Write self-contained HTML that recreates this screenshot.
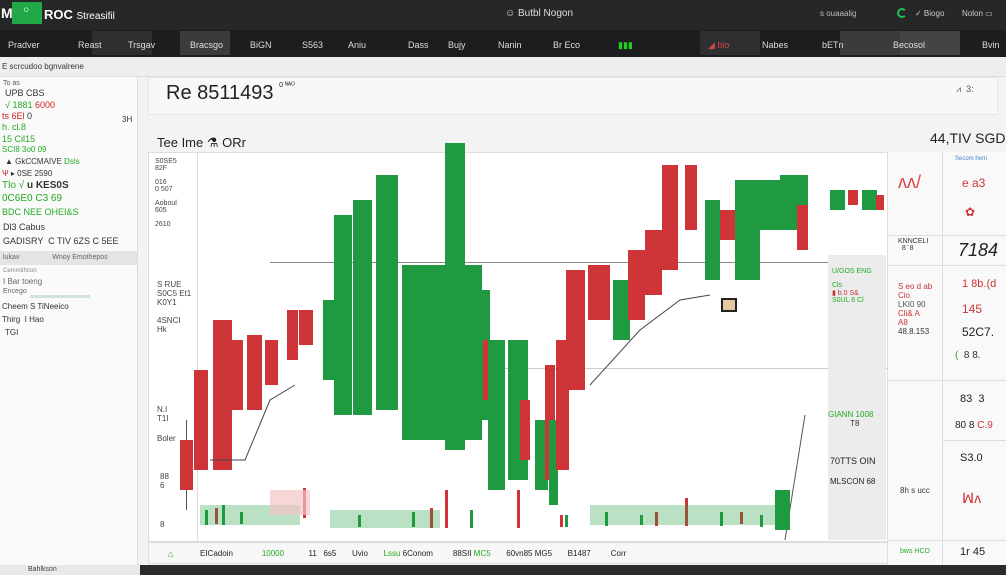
<!DOCTYPE html>
<html><head><meta charset="utf-8"><style>
*{margin:0;padding:0;box-sizing:border-box}
body{width:1006px;height:575px;overflow:hidden;background:#f3f3f3;font-family:"Liberation Sans",sans-serif;position:relative;color:#333}
.a{position:absolute}
.g{position:absolute;background:#1f9a40}
.r{position:absolute;background:#cf3438}
.w{position:absolute;background:#555;width:1px}
.t{position:absolute;font-size:10px;white-space:nowrap}
.nav span{position:absolute;top:40px;font-size:9px;color:#ddd}
</style></head><body>
<div class="a" style="left:0;top:0;width:1006px;height:30px;background:#262728"></div>
<div class="a" style="left:0;top:30px;width:1006px;height:27px;background:#1c1d1e"></div>
<div class="a" style="left:92px;top:31px;width:60px;height:24px;background:#2e2f30"></div>
<div class="a" style="left:180px;top:31px;width:50px;height:24px;background:#3a3b3c"></div>
<div class="a" style="left:700px;top:31px;width:60px;height:24px;background:#2e2f30"></div>
<div class="a" style="left:840px;top:31px;width:60px;height:24px;background:#3a3b3c"></div>
<div class="a" style="left:900px;top:31px;width:60px;height:24px;background:#444"></div>
<div class="t" style="left:1px;top:5px;color:#fff;font-size:14px;font-weight:bold">M</div>
<div class="a" style="left:12px;top:2px;width:30px;height:22px;background:#22a846"></div>
<div class="t" style="left:24px;top:6px;color:#cfe;font-size:9px">ᴼ</div>
<div class="t" style="left:44px;top:7px;color:#fff;font-size:13px;font-weight:bold">ROC <span style="font-weight:normal;font-size:10px">Streasifil</span></div>
<div class="t" style="left:505px;top:8px;color:#ddd;font-size:10px">☺ Butbl Nogon</div>
<div class="t" style="left:820px;top:9px;color:#bbb;font-size:8px">s ouaaalig</div>
<div class="a" style="left:897px;top:8px;width:10px;height:10px;border:2px solid #22c050;border-radius:50%;border-right-color:transparent"></div>
<div class="t" style="left:915px;top:9px;color:#ccc;font-size:8px">✓ Biogo</div>
<div class="t" style="left:962px;top:9px;color:#ccc;font-size:8px">Nolon ▭</div>
<div class="nav">
<span style="left:8px">Pradver</span><span style="left:78px">Reast</span><span style="left:128px">Trsgav</span><span style="left:190px">Bracsgo</span><span style="left:250px">BiGN</span><span style="left:302px">S563</span><span style="left:348px">Aniu</span><span style="left:408px">Dass</span><span style="left:448px">Bujy</span><span style="left:498px">Nanin</span><span style="left:553px">Br Eco</span><span style="left:618px;color:#2c2">▮▮▮</span><span style="left:708px;color:#c44">◢ bio</span><span style="left:762px">Nabes</span><span style="left:822px">bETn</span><span style="left:893px">Becosol</span><span style="left:982px">Bvin</span>
</div>
<div class="a" style="left:0;top:57px;width:1006px;height:20px;background:#eeeeee;border-bottom:1px solid #ddd"></div>
<div class="t" style="left:2px;top:62px;font-size:8px;color:#333">E scrcudoo bgnvalrene</div>
<div class="a" style="left:0;top:77px;width:138px;height:488px;background:#fafafa;border-right:1px solid #ddd"></div>
<div class="t" style="left:3px;top:80px;font-size:7px;color:#555">To as</div>
<div class="t" style="left:5px;top:88px;font-size:9px">UPB CBS</div>
<div class="t" style="left:5px;top:100px;font-size:9px;color:#2a2">√ 1881 <span style="color:#c22">6000</span></div>
<div class="t" style="left:2px;top:111px;font-size:9px;color:#c22">ts 6El <span style="color:#333">0</span></div>
<div class="t" style="left:2px;top:122px;font-size:9px;color:#2a2">h. cl.8</div>
<div class="t" style="left:2px;top:134px;font-size:9px;color:#2a2">15 Cil15</div>
<div class="t" style="left:2px;top:145px;font-size:8px;color:#2a2">SCI8 3o0 09</div>
<div class="t" style="left:5px;top:157px;font-size:8px">▲ GkCCMAIVE <span style="color:#2a2">Dsls</span></div>
<div class="t" style="left:2px;top:169px;font-size:8px;color:#c22">Ψ <span style="color:#333">▸ 0SE 2590</span></div>
<div class="t" style="left:2px;top:180px;font-size:10px;color:#2a2">Tlo √ <b style="color:#333">u KES0S</b></div>
<div class="t" style="left:2px;top:193px;font-size:10px;color:#2a2">0C6E0 C3 69</div>
<div class="t" style="left:2px;top:207px;font-size:9px;color:#2a2">BDC NEE OHEI&amp;S</div>
<div class="t" style="left:3px;top:222px;font-size:9px">Dl3 Cabus</div>
<div class="t" style="left:3px;top:236px;font-size:9px">GADISRY &nbsp;C TIV 6ZS C 5EE</div>
<div class="a" style="left:0;top:251px;width:137px;height:14px;background:#e4e4e4"></div>
<div class="t" style="left:3px;top:254px;font-size:7px;color:#666">lukav &nbsp; &nbsp; &nbsp; &nbsp; &nbsp; &nbsp; &nbsp; &nbsp; Wnoy Emothepos</div>
<div class="t" style="left:3px;top:268px;font-size:6px;color:#888">Cemmithcon</div>
<div class="t" style="left:3px;top:277px;font-size:8px;color:#666">I Bar toeng</div>
<div class="t" style="left:3px;top:288px;font-size:7px;color:#666">Encego</div>
<div class="a" style="left:30px;top:295px;width:60px;height:3px;background:#cfe3dc"></div>
<div class="t" style="left:2px;top:302px;font-size:8px">Cheem S TiNeeico</div>
<div class="t" style="left:2px;top:315px;font-size:8px">Thirg &nbsp;I Hao</div>
<div class="t" style="left:5px;top:328px;font-size:8px">TGI</div>
<div class="t" style="left:122px;top:115px;font-size:8px">3H</div>
<div class="a" style="left:148px;top:77px;width:850px;height:38px;background:#f8f8f8;border:1px solid #e5e5e5"></div>
<div class="t" style="left:166px;top:82px;font-size:20px;color:#222">Re 8511493 <span style="font-size:7px;vertical-align:top">0 ᴺᴬᴼ</span></div>
<div class="t" style="left:956px;top:84px;font-size:9px;color:#555">⩘ &nbsp;3:</div>
<div class="t" style="left:157px;top:135px;font-size:13px;color:#222">Tee Ime ⚗ ORr</div>
<div class="t" style="left:930px;top:130px;font-size:14px;color:#222">44,TIV SGDL</div>
<div class="a" style="left:148px;top:152px;width:740px;height:390px;background:#fff;border:1px solid #ddd"></div>
<div class="a" style="left:197px;top:152px;width:1px;height:390px;background:#ddd"></div>
<div class="a" style="left:270px;top:262px;width:560px;height:1px;background:#888"></div>
<div class="a" style="left:460px;top:368px;width:428px;height:1px;background:#ccc"></div>
<div class="a" style="left:828px;top:255px;width:58px;height:285px;background:#ececec"></div>
<div class="t" style="left:155px;top:158px;font-size:7px;color:#444">S0SE5<br>82F<br><br>016<br>0 507<br><br>Aoboul<br>605<br><br>2610</div>
<div class="t" style="left:157px;top:280px;font-size:8px;color:#444">S RUE<br>S0C5 Et1<br>K0Y1<br><br>4SNCI<br>Hk</div>
<div class="t" style="left:157px;top:405px;font-size:8px;color:#444">N.I<br>T1I</div>
<div class="t" style="left:157px;top:434px;font-size:8px;color:#444">Boler</div>
<div class="t" style="left:160px;top:472px;font-size:8px;color:#444">88<br>6</div>
<div class="t" style="left:160px;top:520px;font-size:8px;color:#444">8</div>
<div class="t" style="left:832px;top:268px;font-size:7px;color:#2a2">U/GOS ENG<br><br>Cls<br><span style="color:#c33">▮ b.0 S&amp;</span><br>S0UL 6 Cl</div>
<div class="t" style="left:828px;top:410px;font-size:8px;color:#2a2">GIANN 1008<br><span style="color:#333">&nbsp; &nbsp; &nbsp; &nbsp; &nbsp; T8</span></div>
<div class="t" style="left:830px;top:456px;font-size:9px;color:#222">70TTS OIN</div>
<div class="t" style="left:830px;top:477px;font-size:8px;color:#222">MLSCON 68</div>
<div class="w" style="left:186px;top:420px;height:90px"></div>
<div class="r" style="left:180px;top:440px;width:13px;height:50px"></div>
<div class="r" style="left:194px;top:370px;width:14px;height:100px"></div>
<div class="r" style="left:213px;top:320px;width:19px;height:150px"></div>
<div class="r" style="left:230px;top:340px;width:13px;height:70px"></div>
<div class="r" style="left:247px;top:335px;width:15px;height:75px"></div>
<div class="r" style="left:265px;top:340px;width:13px;height:45px"></div>
<div class="r" style="left:287px;top:310px;width:11px;height:50px"></div>
<div class="r" style="left:299px;top:310px;width:14px;height:35px"></div>
<div class="g" style="left:323px;top:300px;width:11px;height:80px"></div>
<div class="g" style="left:334px;top:215px;width:18px;height:200px"></div>
<div class="g" style="left:353px;top:200px;width:19px;height:215px"></div>
<div class="g" style="left:376px;top:175px;width:22px;height:235px"></div>
<div class="g" style="left:402px;top:265px;width:44px;height:175px"></div>
<div class="g" style="left:445px;top:143px;width:20px;height:307px"></div>
<div class="g" style="left:462px;top:265px;width:20px;height:175px"></div>
<div class="g" style="left:470px;top:290px;width:20px;height:130px"></div>
<div class="r" style="left:483px;top:340px;width:12px;height:60px"></div>
<div class="g" style="left:488px;top:340px;width:17px;height:150px"></div>
<div class="g" style="left:508px;top:340px;width:20px;height:140px"></div>
<div class="r" style="left:520px;top:400px;width:10px;height:60px"></div>
<div class="g" style="left:535px;top:420px;width:13px;height:70px"></div>
<div class="r" style="left:545px;top:365px;width:10px;height:115px"></div>
<div class="g" style="left:549px;top:420px;width:9px;height:85px"></div>
<div class="r" style="left:556px;top:340px;width:13px;height:130px"></div>
<div class="r" style="left:566px;top:270px;width:19px;height:120px"></div>
<div class="r" style="left:588px;top:265px;width:22px;height:55px"></div>
<div class="g" style="left:613px;top:280px;width:17px;height:60px"></div>
<div class="r" style="left:628px;top:250px;width:17px;height:70px"></div>
<div class="r" style="left:645px;top:230px;width:17px;height:65px"></div>
<div class="r" style="left:662px;top:165px;width:16px;height:105px"></div>
<div class="r" style="left:685px;top:165px;width:12px;height:65px"></div>
<div class="g" style="left:705px;top:200px;width:15px;height:80px"></div>
<div class="r" style="left:720px;top:210px;width:15px;height:30px"></div>
<div class="g" style="left:735px;top:180px;width:25px;height:100px"></div>
<div class="g" style="left:750px;top:180px;width:30px;height:50px"></div>
<div class="g" style="left:780px;top:175px;width:28px;height:55px"></div>
<div class="r" style="left:797px;top:205px;width:11px;height:45px"></div>
<div class="g" style="left:830px;top:190px;width:15px;height:20px"></div>
<div class="r" style="left:848px;top:190px;width:10px;height:15px"></div>
<div class="g" style="left:862px;top:190px;width:15px;height:20px"></div>
<div class="r" style="left:876px;top:195px;width:8px;height:15px"></div>
<div class="a" style="left:721px;top:298px;width:16px;height:14px;border:2px solid #222;background:#e5c9a0"></div>
<svg class="a" style="left:0;top:0" width="1006" height="575"><polyline fill="none" stroke="#444" stroke-width="1" points="210,460 245,460 270,400 295,385"/><polyline fill="none" stroke="#444" stroke-width="1" points="590,385 640,330 680,300 710,295"/><line x1="785" y1="540" x2="805" y2="415" stroke="#555"/>
<g fill="#1f9a40"><rect x="205" y="510" width="3" height="15"/><rect x="222" y="505" width="3" height="20"/><rect x="240" y="512" width="3" height="12"/><rect x="358" y="515" width="3" height="12"/><rect x="412" y="512" width="3" height="15"/><rect x="470" y="510" width="3" height="18"/><rect x="565" y="515" width="3" height="12"/><rect x="605" y="512" width="3" height="14"/><rect x="640" y="515" width="3" height="10"/><rect x="720" y="512" width="3" height="14"/><rect x="760" y="515" width="3" height="12"/></g>
<g fill="#cf3438"><rect x="215" y="508" width="3" height="16"/><rect x="430" y="508" width="3" height="20"/><rect x="560" y="515" width="3" height="12"/><rect x="655" y="512" width="3" height="14"/><rect x="740" y="512" width="3" height="12"/></g></svg>
<div class="r" style="left:303px;top:488px;width:3px;height:30px"></div>
<div class="r" style="left:445px;top:490px;width:3px;height:38px"></div>
<div class="r" style="left:517px;top:490px;width:3px;height:38px"></div>
<div class="r" style="left:685px;top:498px;width:3px;height:28px"></div>
<div class="g" style="left:200px;top:505px;width:100px;height:20px;opacity:.3"></div>
<div class="g" style="left:330px;top:510px;width:110px;height:18px;opacity:.3"></div>
<div class="g" style="left:590px;top:505px;width:200px;height:20px;opacity:.3"></div>
<div class="g" style="left:775px;top:490px;width:15px;height:40px"></div>
<div class="a" style="left:270px;top:490px;width:40px;height:25px;background:#f2c4c6;opacity:.7"></div>
<div class="a" style="left:148px;top:542px;width:740px;height:22px;background:#f7f7f7;border:1px solid #ddd"></div>
<div class="t" style="left:168px;top:549px;font-size:9px;color:#2a2">⌂</div>
<div class="t" style="left:200px;top:549px;font-size:8px;color:#222">EICadoin &nbsp; &nbsp; &nbsp; &nbsp; &nbsp; &nbsp; <span style="color:#2a2">10000</span> &nbsp; &nbsp; &nbsp; &nbsp; &nbsp; 11 &nbsp; 6s5 &nbsp; &nbsp; &nbsp; Uvio &nbsp; &nbsp; &nbsp; <span style="color:#2a2">Lssu</span> 6Conom &nbsp; &nbsp; &nbsp; &nbsp; 88SII <span style="color:#2a2">MC5</span> &nbsp; &nbsp; &nbsp; 60vn85 MG5 &nbsp; &nbsp; &nbsp; B1487 &nbsp; &nbsp; &nbsp; &nbsp; Corr</div>
<div class="a" style="left:888px;top:152px;width:118px;height:413px;background:#f9f9f9"></div>
<div class="a" style="left:942px;top:152px;width:1px;height:413px;background:#ddd"></div>
<div class="a" style="left:888px;top:235px;width:118px;height:1px;background:#ddd"></div>
<div class="a" style="left:888px;top:265px;width:118px;height:1px;background:#ddd"></div>
<div class="a" style="left:888px;top:380px;width:118px;height:1px;background:#ddd"></div>
<div class="a" style="left:943px;top:440px;width:63px;height:1px;background:#ddd"></div>
<div class="a" style="left:888px;top:540px;width:118px;height:1px;background:#ddd"></div>
<div class="t" style="left:955px;top:156px;font-size:6px;color:#48c">Secom hem</div>
<div class="t" style="left:962px;top:176px;font-size:12px;color:#c33">e a3</div>
<div class="t" style="left:898px;top:172px;font-size:18px;color:#d44">ʌʌ/</div>
<div class="t" style="left:965px;top:205px;font-size:12px;color:#c33">✿</div>
<div class="t" style="left:898px;top:238px;font-size:7px">KNNCELI<br>&nbsp; 8 ̈ 8</div>
<div class="t" style="left:958px;top:240px;font-size:18px;font-style:italic;color:#222">7184</div>
<div class="t" style="left:898px;top:282px;font-size:8px;color:#c33">S eo d ab<br>Cio<br><span style="color:#555">LKI0 90</span><br>Cli&amp; A<br>A8<br><span style="color:#333">48.8.153</span></div>
<div class="t" style="left:962px;top:278px;font-size:11px;color:#c33">1 8b.(d</div>
<div class="t" style="left:962px;top:302px;font-size:12px;color:#c33">145</div>
<div class="t" style="left:962px;top:325px;font-size:12px;color:#222">52C7.</div>
<div class="t" style="left:955px;top:350px;font-size:10px;color:#2a2">( &nbsp;<span style="color:#333">8 8.</span></div>
<div class="t" style="left:960px;top:393px;font-size:11px;color:#222">83 &nbsp;3</div>
<div class="t" style="left:955px;top:420px;font-size:10px;color:#222">80 8 <span style="color:#c33">C.9</span></div>
<div class="t" style="left:960px;top:452px;font-size:11px;color:#222">S3.0</div>
<div class="t" style="left:900px;top:486px;font-size:8px;color:#333">8h s ucc</div>
<div class="t" style="left:962px;top:490px;font-size:14px;color:#c33">ꟽʌ</div>
<div class="t" style="left:900px;top:548px;font-size:7px;color:#2a2">bws HCO</div>
<div class="t" style="left:960px;top:546px;font-size:11px;color:#222">1r 45</div>
<div class="a" style="left:0;top:565px;width:1006px;height:10px;background:#2a2b2c"></div>
<div class="a" style="left:0;top:565px;width:140px;height:10px;background:#e9e9e9"></div>
<div class="t" style="left:28px;top:566px;font-size:7px;color:#444">Bahlkson</div>
</body></html>
